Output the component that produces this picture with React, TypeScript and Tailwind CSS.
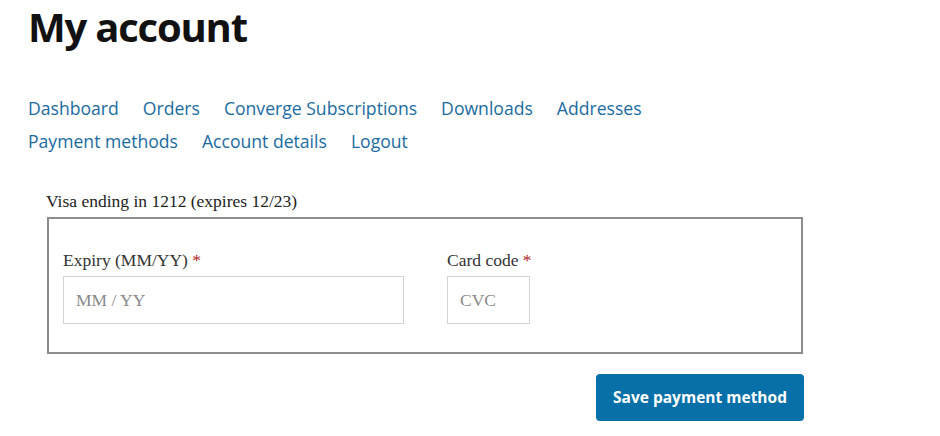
export default function App() {
  const sans = { fontFamily: '"Open Sans", "Noto Sans", sans-serif' }
  const serif = { fontFamily: '"Liberation Serif", "DejaVu Serif", serif' }
  const row1 = ['Dashboard', 'Orders', 'Converge Subscriptions', 'Downloads', 'Addresses']
  const row2 = ['Payment methods', 'Account details', 'Logout']

  return (
    <div className="min-h-screen w-[940px] bg-white pl-[28px]" style={sans}>
      {/* Title */}
      <h1 className="pt-[2px] text-[40px] font-bold leading-[50px] tracking-[-1.2px] text-[#111]">
        My account
      </h1>

      {/* Account navigation */}
      <nav className="mt-[43px] flex flex-col gap-[6px] text-[17.6px] leading-[27px] text-[#1b6ba1]">
        <div className="flex gap-x-[24px]">
          {row1.map((item) => (
            <a key={item} href="#" className="hover:underline">
              {item}
            </a>
          ))}
        </div>
        <div className="flex gap-x-[24px]">
          {row2.map((item) => (
            <a key={item} href="#" className="hover:underline">
              {item}
            </a>
          ))}
        </div>
      </nav>

      {/* Payment method form */}
      <div className="ml-[18px] mt-[36px] w-[758px]" style={serif}>
        <p className="text-[17.5px] leading-[21px] text-[#222]">
          Visa ending in 1212 (expires 12/23)
        </p>
        <div className="ml-[1px] mt-[5px] flex h-[137px] w-[756px] gap-[43px] border-2 border-[#8c8c8c] px-[14px] pt-[31px]">
          <div className="flex flex-col">
            <label className="text-[17.5px] leading-[21px] text-[#333]">
              Expiry (MM/YY) <span className="text-[#b22222]">*</span>
            </label>
            <input
              placeholder="MM / YY"
              className="mt-[5px] h-[48px] w-[341px] border border-[#d4d4d4] px-[12px] text-[17.5px] outline-none placeholder:text-[#8a8a8a]"
              style={serif}
            />
          </div>
          <div className="flex flex-col">
            <label className="text-[17.5px] leading-[21px] text-[#333]">
              Card code <span className="text-[#b22222]">*</span>
            </label>
            <input
              placeholder="CVC"
              className="mt-[5px] h-[48px] w-[83px] border border-[#d4d4d4] px-[12px] text-[17.5px] outline-none placeholder:text-[#8a8a8a]"
              style={serif}
            />
          </div>
        </div>
        <div className="mt-[20px] flex justify-end">
          <button
            className="h-[47px] w-[208px] rounded-[4px] bg-[#0870a8] text-[15.5px] font-bold text-white"
            style={sans}
          >
            Save payment method
          </button>
        </div>
      </div>
    </div>
  )
}
